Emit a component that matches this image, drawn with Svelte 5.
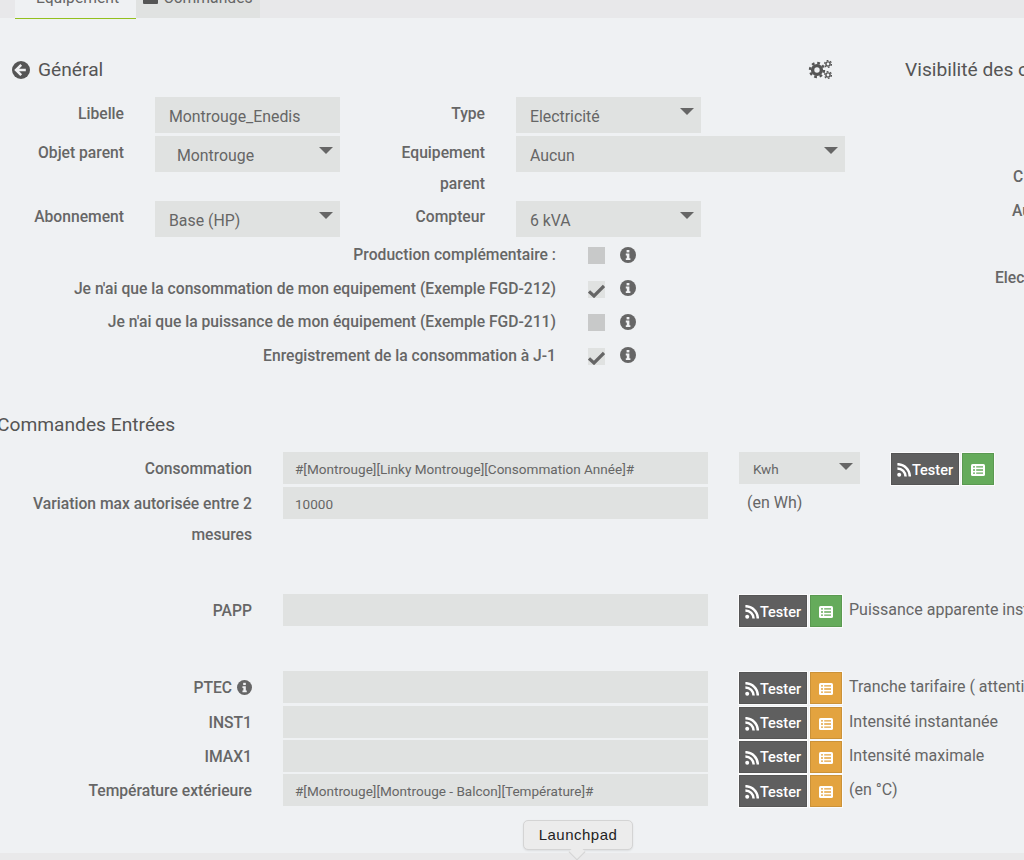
<script>
  const checks = [
    { label: 'Production complémentaire :', on: false },
    { label: "Je n'ai que la consommation de mon equipement (Exemple FGD-212)", on: true },
    { label: "Je n'ai que la puissance de mon équipement (Exemple FGD-211)", on: false },
    { label: 'Enregistrement de la consommation à J-1', on: true }
  ];
  const late = [
    { label: 'PTEC', info: true, value: '', note: 'Tranche tarifaire ( attention' },
    { label: 'INST1', value: '', note: 'Intensité instantanée' },
    { label: 'IMAX1', value: '', note: 'Intensité maximale' },
    { label: 'Température extérieure', value: '#[Montrouge][Montrouge - Balcon][Température]#', note: '(en °C)' }
  ];
</script>

{#snippet info(cls = '')}
  <svg class="info {cls}" viewBox="0 0 16 16">
    <circle cx="8" cy="8" r="8" fill="#666" />
    <rect x="6.6" y="3" width="2.8" height="2.4" fill="#f0f1f3" />
    <path d="M5.8 6.6h3.6v4.6h1v1.8H5.8v-1.8h1V8.4h-1z" fill="#f0f1f3" />
  </svg>
{/snippet}

{#snippet buttons(color)}
  <div class="btns">
    <button class="btn test">
      <svg class="rss" viewBox="0 0 14 14">
        <circle cx="2.2" cy="11.8" r="2" fill="#fff" />
        <path d="M.4 5.4a8.2 8.2 0 0 1 8.2 8.2M.4 1.2a12.4 12.4 0 0 1 12.4 12.4" fill="none" stroke="#fff" stroke-width="2.5" />
      </svg>Tester
    </button>
    <button class="btn {color}">
      <svg class="list" viewBox="0 0 14 12">
        <rect width="14" height="12" rx="1.6" fill="#fff" />
        <path d="M2 2.8h2M2 6h2M2 9.2h2M5.2 2.8h6.8M5.2 6h6.8M5.2 9.2h6.8" class="lines" />
      </svg>
    </button>
  </div>
{/snippet}

{#snippet arrow()}
  <span class="arrow"></span>
{/snippet}

<div class="page">
  <nav class="tabs">
    <div class="tab active">Equipement</div>
    <div class="tab">
      <svg class="tabicon" viewBox="0 0 15 12"><rect width="15" height="12" rx="1" fill="#555" /></svg>
      Commandes
    </div>
  </nav>

  <section class="top">
    <div class="left">
      <div class="heading">
        <h3>
          <svg class="back" viewBox="0 0 18 18">
            <circle cx="9" cy="9" r="9" fill="#555" />
            <path d="M9.2 3.8 4 9l5.2 5.2M4.6 9h9.2" fill="none" stroke="#f0f1f3" stroke-width="2.5" />
          </svg>
          Général
        </h3>
        <svg class="cogs" viewBox="0 0 24 20">
          <g fill="none" stroke="#555">
            <circle cx="9" cy="10" r="4.4" stroke-width="3.4" />
            <circle cx="9" cy="10" r="7" stroke-width="2.4" stroke-dasharray="2.75 2.75" />
            <circle cx="20" cy="4" r="2.1" stroke-width="1.4" />
            <circle cx="20" cy="4" r="3.4" stroke-width="1.3" stroke-dasharray="1.78 1.78" />
            <circle cx="20" cy="15" r="2.1" stroke-width="1.4" />
            <circle cx="20" cy="15" r="3.4" stroke-width="1.3" stroke-dasharray="1.78 1.78" />
          </g>
        </svg>
      </div>

      <div class="form">
        <div class="lbl">Libelle</div>
        <div class="field">Montrouge_Enedis</div>
        <div class="lbl l2">Type</div>
        <div class="field short">Electricité{@render arrow()}</div>

        <div class="lbl">Objet parent</div>
        <div class="field indent">Montrouge{@render arrow()}</div>
        <div class="lbl l2">Equipement parent</div>
        <div class="field">Aucun{@render arrow()}</div>

        <div class="lbl">Abonnement</div>
        <div class="field">Base (HP){@render arrow()}</div>
        <div class="lbl l2">Compteur</div>
        <div class="field short">6 kVA{@render arrow()}</div>
      </div>

      <div class="checks">
        {#each checks as c}
          <div class="check">
            <div class="lbl">{c.label}</div>
            <div class="box" class:on={c.on}>
              {#if c.on}
                <svg viewBox="0 0 17 17"><path d="M1 10.5 6 15 16 5" fill="none" stroke="#666" stroke-width="3.2" /></svg>
              {/if}
            </div>
            {@render info()}
          </div>
        {/each}
      </div>
    </div>

    <aside class="side">
      <h3>Visibilité des commandes</h3>
      <div class="sidelbl s1">C</div>
      <div class="sidelbl s2">Au</div>
      <div class="sidelbl s3">Elec</div>
    </aside>
  </section>

  <h3 class="cmdtitle">Commandes Entrées</h3>

  <section class="cmds">
    <div class="cmd">
      <div class="lbl">Consommation</div>
      <div class="cfield">#[Montrouge][Linky Montrouge][Consommation Année]#</div>
      <div class="cfield unit">Kwh{@render arrow()}</div>
      {@render buttons('green')}
    </div>
    <div class="cmd tall">
      <div class="lbl">Variation max autorisée entre 2 mesures</div>
      <div class="cfield">10000</div>
      <div class="note wh">(en Wh)</div>
    </div>
    <div class="cmd spaced">
      <div class="lbl">PAPP</div>
      <div class="cfield"></div>
      {@render buttons('green')}
      <div class="note">Puissance apparente instantanée</div>
    </div>
    {#each late as r, i}
      <div class="cmd" class:spaced2={i === 0}>
        <div class="lbl">{r.label}{#if r.info}{@render info('inline')}{/if}</div>
        <div class="cfield">{r.value}</div>
        {@render buttons('orange')}
        <div class="note">{r.note}</div>
      </div>
    {/each}
  </section>

  <footer class="dock"></footer>
  <div class="tip">Launchpad</div>
</div>

<style>
  :global(body) {
    background: #eff1f3;
  }
  .page {
    position: relative;
    width: 1024px;
    height: 860px;
    overflow: hidden;
    display: flex;
    flex-direction: column;
    background: #eff1f3;
    color: #666;
    font-family: Roboto, 'Noto Sans', sans-serif;
    font-size: 15.85px;
  }
  .tabs {
    display: flex;
    flex: none;
    height: 18px;
    padding-left: 15px;
    background: #e8e8ea;
  }
  .tab {
    display: flex;
    align-items: flex-end;
    gap: 5px;
    justify-content: center;
    width: 124px;
    height: 18px;
    padding-bottom: 11px;
    box-sizing: border-box;
    line-height: 18px;
    font-size: 15.7px;
    background: #e0e2e1;
    white-space: nowrap;
  }
  .tab.active {
    width: 121px;
    height: 19px;
    padding-left: 4px;
    background: #eff1f3;
    border-bottom: 1px solid #93c01f;
  }
  .tabicon {
    width: 15px;
    height: 12px;
    flex: none;
    margin-bottom: 3px;
  }
  h3 {
    margin: 0;
    font-size: 19.2px;
    font-weight: 400;
    line-height: 24px;
    color: #555;
    white-space: nowrap;
  }
  .top {
    display: flex;
    flex: none;
    padding-top: 40px;
  }
  .left {
    width: 905px;
    flex: none;
  }
  .heading {
    display: flex;
    align-items: center;
    justify-content: space-between;
    width: 832px;
    height: 24px;
    margin-bottom: 15px;
  }
  .heading h3 {
    display: flex;
    align-items: center;
    gap: 8px;
    padding-left: 12px;
  }
  .back {
    width: 18px;
    height: 18px;
  }
  .cogs {
    width: 24px;
    height: 20px;
  }
  .lbl {
    font-weight: 500;
    font-size: 15.67px;
    line-height: 31px;
    text-align: right;
    color: #666;
  }
  .form {
    display: grid;
    grid-template-columns: 155px 185px 176px 329px;
    row-gap: 3px;
  }
  .form .lbl {
    padding-right: 31px;
  }
  .form .lbl.l2 {
    padding-right: 31px;
    padding-left: 31px;
  }
  /* first two rows sit a pixel lower than the third in the original */
  .form .lbl:nth-child(-n+8) {
    padding-top: 1px;
    margin-bottom: -1px;
  }
  .field {
    position: relative;
    height: 36px;
    padding: 3px 14px 0;
    box-sizing: border-box;
    line-height: 34px;
    background: #e0e2e1;
    color: #666;
  }
  .field.short {
    width: 185px;
  }
  .field.indent {
    padding-left: 22px;
  }
  .arrow {
    position: absolute;
    top: 11px;
    right: 7px;
    width: 0;
    height: 0;
    border-style: solid;
    border-width: 7px 7px 0;
    border-color: #666 transparent transparent;
  }
  .checks {
    display: flex;
    flex-direction: column;
    margin-top: 1px;
  }
  .check {
    display: grid;
    grid-template-columns: 556px 17px 16px;
    column-gap: 32px;
    align-items: center;
    height: 33.5px;
  }
  .check .info {
    margin-left: -17px;
  }
  .box {
    width: 17px;
    height: 17px;
    margin-top: 2px;
    background: #c8c9c9;
  }
  .box.on {
    background: #e0e2e1;
  }
  .box svg {
    display: block;
  }
  .info {
    display: block;
    width: 16px;
    height: 16px;
  }
  .info.inline {
    display: inline-block;
    width: 15px;
    height: 15px;
    margin-left: 5px;
    vertical-align: -2px;
  }
  .side {
    position: relative;
    flex: none;
    white-space: nowrap;
  }
  .sidelbl {
    position: absolute;
    font-weight: 500;
    font-size: 15.67px;
    line-height: 20px;
  }
  .s1 { left: 108px; top: 109px; }
  .s2 { left: 107px; top: 143px; }
  .s3 { left: 90px; top: 210px; }
  .cmdtitle {
    flex: none;
    margin: 41px 0 15px -3px;
  }
  .cmds {
    display: flex;
    flex-direction: column;
  }
  .cmd {
    display: flex;
    align-items: flex-start;
    height: 34.33px;
    flex: none;
  }
  .cmd:first-child {
    height: 35px;
  }
  .cmd.tall {
    height: 62px;
  }
  .cmd.spaced {
    margin-top: 45px;
  }
  .cmd.spaced2 {
    margin-top: 43px;
  }
  .cmd .lbl {
    flex: none;
    width: 222px;
    padding-top: 1px;
    margin-left: 30px;
    margin-right: 31px;
  }
  .cmd.tall .lbl {
    width: 240px;
    margin-left: 12px;
  }
  .cfield {
    position: relative;
    flex: none;
    width: 425px;
    height: 32px;
    padding: 1px 12px 0;
    box-sizing: border-box;
    margin-right: 31px;
    line-height: 32px;
    font-size: 13.55px;
    background: #e0e2e1;
  }
  .cfield.unit {
    width: 121px;
    padding-left: 14px;
  }
  .btns {
    display: flex;
    flex: none;
    gap: 3px;
    margin-top: 1px;
  }
  .btn {
    display: flex;
    align-items: center;
    justify-content: center;
    height: 32px;
    padding: 2px 0 0;
    border: 1px solid rgba(0, 0, 0, 0.1);
    border-radius: 0;
    box-shadow: 0 0 0 1px #fbfbfb;
    color: #fff;
    font: 500 14.5px Roboto, sans-serif;
    box-sizing: border-box;
  }
  .test {
    width: 68px;
    background: #5f5f5f;
  }
  .green,
  .orange {
    width: 32px;
  }
  .green {
    --c: #65ab5b;
    background: var(--c);
  }
  .orange {
    --c: #e3a33f;
    background: var(--c);
  }
  .rss {
    width: 14px;
    height: 14px;
    margin-right: 1px;
  }
  .list {
    width: 14px;
    height: 12px;
  }
  .lines {
    fill: none;
    stroke: var(--c);
    stroke-width: 1.3;
  }
  .note {
    margin-left: 7px;
    padding-top: 1px;
    line-height: 30px;
    white-space: nowrap;
    font-size: 16px;
  }
  .note.wh {
    margin-left: 8px;
  }
  .dock {
    position: absolute;
    left: 0;
    right: 0;
    bottom: 0;
    height: 7px;
    background: #e9e9ea;
  }
  .tip {
    position: absolute;
    left: 523px;
    top: 820px;
    width: 110px;
    height: 30px;
    box-sizing: border-box;
    border: 1px solid #d4d4d4;
    border-radius: 5px;
    background: #ececec;
    color: #222;
    text-align: center;
    font: 15px/28px 'Liberation Sans', Arial, sans-serif;
    letter-spacing: 0.5px;
    box-shadow: 0 1px 2px rgba(0, 0, 0, 0.08);
  }
  .tip::after {
    content: '';
    position: absolute;
    left: 47px;
    top: 25px;
    width: 11px;
    height: 11px;
    background: #ececec;
    border-right: 1px solid #d4d4d4;
    border-bottom: 1px solid #d4d4d4;
    transform: rotate(45deg);
  }
</style>
